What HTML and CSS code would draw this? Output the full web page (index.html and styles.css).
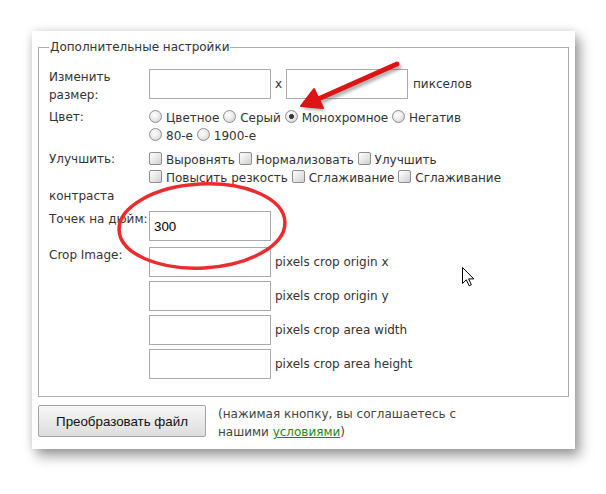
FILE: index.html
```html
<!DOCTYPE html>
<html lang="ru">
<head>
<meta charset="utf-8">
<title>Дополнительные настройки</title>
<link rel="stylesheet" href="styles.css">
</head>
<body>
<div class="page">
  <div class="panel">
    <fieldset class="opts">
      <legend>Дополнительные настройки</legend>

      <div class="row row-size">
        <div class="lbl">Изменить размер:</div>
        <div class="ctl inline">
          <input class="txt" type="text">
          <span class="times">x</span>
          <input class="txt" type="text">
          <span class="unit">пикселов</span>
        </div>
      </div>

      <div class="row row-color">
        <div class="lbl">Цвет:</div>
        <div class="ctl">
          <div class="line">
            <label class="opt"><input type="radio" name="c">Цветное</label>
            <label class="opt"><input type="radio" name="c">Серый</label>
            <label class="opt"><input type="radio" name="c" checked>Монохромное</label>
            <label class="opt"><input type="radio" name="c">Негатив</label>
          </div>
          <div class="line">
            <label class="opt"><input type="radio" name="c">80-е</label>
            <label class="opt"><input type="radio" name="c">1900-е</label>
          </div>
        </div>
      </div>

      <div class="row row-enh">
        <div class="lbl">Улучшить:</div>
        <div class="ctl">
          <div class="line">
            <label class="opt"><input type="checkbox">Выровнять</label>
            <label class="opt"><input type="checkbox">Нормализовать</label>
            <label class="opt"><input type="checkbox">Улучшить</label>
          </div>
          <div class="line">
            <label class="opt"><input type="checkbox">Повысить резкость</label>
            <label class="opt"><input type="checkbox">Сглаживание</label>
            <label class="opt"><input type="checkbox">Сглаживание</label>
          </div>
        </div>
      </div>
      <div class="wrapline">контраста</div>

      <div class="row row-dpi">
        <div class="lbl nowrap">Точек на дюйм:</div>
        <div class="ctl inline">
          <input class="txt" type="text" value="300">
        </div>
      </div>

      <div class="row row-crop">
        <div class="lbl">Crop Image:</div>
        <div class="ctl stack">
          <div class="inline"><input class="txt" type="text"><span class="unit">pixels crop origin x</span></div>
          <div class="inline"><input class="txt" type="text"><span class="unit">pixels crop origin y</span></div>
          <div class="inline"><input class="txt" type="text"><span class="unit">pixels crop area width</span></div>
          <div class="inline"><input class="txt" type="text"><span class="unit">pixels crop area height</span></div>
        </div>
      </div>
    </fieldset>

    <div class="submit-row">
      <button class="btn" type="button">Преобразовать файл</button>
      <p class="note">(нажимая кнопку, вы соглашаетесь с нашими <a href="#">условиями</a>)</p>
    </div>
  </div>
</div>

<svg class="overlay" width="606" height="494" viewBox="0 0 606 494">
  <defs>
    <filter id="sh" x="-20%" y="-20%" width="140%" height="140%">
      <feGaussianBlur stdDeviation="1.6"/>
    </filter>
  </defs>
  <g transform="translate(2,3)" opacity="0.45" filter="url(#sh)">
    <line x1="397" y1="64" x2="316" y2="100" stroke="#555" stroke-width="5" stroke-linecap="round"/>
    <polygon points="301,106 314,89 323,108" fill="#555"/>
  </g>
  <line x1="397" y1="64" x2="316" y2="100" stroke="#dc1414" stroke-width="5" stroke-linecap="round"/>
  <polygon points="301,106 314,89 323,108" fill="#dc1414" stroke="#dc1414" stroke-width="2" stroke-linejoin="round"/>
  <ellipse cx="202" cy="226" rx="83" ry="42" transform="rotate(-3 202 226)" fill="none" stroke="#ec2a2f" stroke-width="3.5"/>
  <path d="M462.5 267.5 L462.5 283.5 L466.3 279.8 L469.2 285.8 L471.4 284.8 L468.6 278.9 L473.8 278.9 Z" fill="#fff" stroke="#000" stroke-width="1" stroke-linejoin="miter"/>
</svg>
</body>
</html>
```
FILE: styles.css
```css
html, body {
  margin: 0;
  padding: 0;
  background: #ffffff;
}

body {
  font-family: "DejaVu Sans", Verdana, sans-serif;
  font-size: 12px;
  line-height: 18px;
  color: #333333;
  width: 606px;
  height: 494px;
  overflow: hidden;
  position: relative;
}

.page {
  padding: 31px 0 0 32px;
}

.panel {
  width: 543px;
  box-sizing: border-box;
  padding: 7px 6px 8px 6px;
  background: #fff;
  box-shadow: 0 0 9px rgba(0, 0, 0, 0.12), 5px 7px 12px rgba(0, 0, 0, 0.38);
}

.opts {
  margin: 0;
  border: 1px solid #ababab;
  padding: 13px 10px 17px 10px;
  min-width: 0;
}

.opts legend {
  padding: 0 1px;
  font-size: 12px;
  line-height: 18px;
  color: #333333;
}

.row {
  display: grid;
  grid-template-columns: 100px 1fr;
  align-items: start;
}

.row-color { margin-top: 5px; }
.row-enh { margin-top: 6px; }
.row-dpi { margin-top: 6px; }
.row-crop { margin-top: 6px; }

.lbl {
  margin-top: -1px;
}

.nowrap { white-space: nowrap; }

.inline {
  display: flex;
  align-items: center;
}

.stack {
  display: flex;
  flex-direction: column;
  gap: 4px;
}

.txt {
  box-sizing: border-box;
  width: 122px;
  height: 30px;
  margin: 0;
  border: 1px solid #aaaaaa;
  border-radius: 0;
  padding: 0 4px;
  background: #fff;
  font-family: "Liberation Sans", Arial, sans-serif;
  font-size: 13.33px;
  color: #000;
  outline: none;
}

.times {
  margin: 0 4px;
  width: 7px;
}

.unit {
  margin-left: 5px;
  white-space: nowrap;
}

.stack .unit { margin-left: 4px; }

.line {
  white-space: nowrap;
  height: 18px;
}

.opt {
  display: inline;
}

.opt input {
  -webkit-appearance: none;
  appearance: none;
  display: inline-block;
  box-sizing: border-box;
  width: 13px;
  height: 13px;
  margin: 0 4px 0 0;
  vertical-align: -1px;
  border: 1px solid #8e8e8e;
  background: linear-gradient(135deg, #ffffff 0%, #e6e6e6 55%, #cfcfcf 100%);
}

.opt input[type="radio"] {
  border-radius: 50%;
  background: radial-gradient(circle at 40% 35%, #ffffff 0%, #ececec 45%, #c8c8c8 100%);
}

.opt input[type="radio"]:checked {
  background: radial-gradient(circle, #3a3a3a 0, #3a3a3a 2.2px, transparent 2.8px),
              radial-gradient(circle at 40% 35%, #ffffff 0%, #ececec 45%, #c8c8c8 100%);
}

.opt input[type="checkbox"] {
  border-radius: 2px;
}

.wrapline {
  height: 18px;
}

.submit-row {
  display: flex;
  align-items: flex-start;
  margin-top: 8px;
}

.btn {
  box-sizing: border-box;
  width: 168px;
  height: 32px;
  margin: 0;
  border: 1px solid #a3a3a3;
  border-radius: 2px;
  background: linear-gradient(#f7f7f7, #dddddd);
  font-family: "Liberation Sans", Arial, sans-serif;
  font-size: 13.33px;
  color: #111;
  padding: 0;
}

.note {
  margin: 0 0 0 12px;
  width: 245px;
  color: #444;
}

.note a {
  color: #188a18;
  text-decoration: underline;
  text-decoration-color: #188a18;
}

.overlay {
  position: absolute;
  left: 0;
  top: 0;
  pointer-events: none;
}
```
